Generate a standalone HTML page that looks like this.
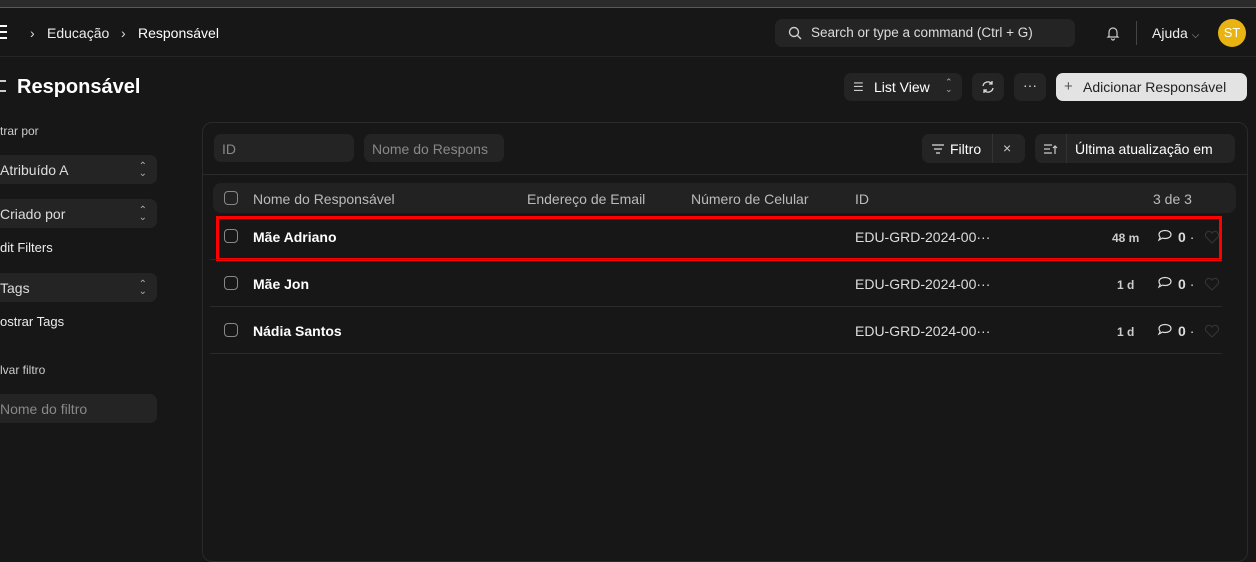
<!DOCTYPE html>
<html><head><meta charset="utf-8"><style>
*{box-sizing:border-box;margin:0;padding:0}
body{width:1256px;height:534px;overflow:hidden;background:#171717;font-family:"Liberation Sans",sans-serif;color:#e6e6e6;position:relative;font-size:14px}
.a{position:absolute}
.top{left:0;top:0;width:1256px;height:8px;background:#2b2b2b;border-bottom:1px solid #5a5a5a}
.nav{left:0;top:9px;width:1256px;height:48px;border-bottom:1px solid #262626}
.inp{background:#242424;border-radius:7px}
.btn{background:#242424;border-radius:7px}
.sel{background:#242424;border-radius:7px;color:#ddd;font-size:14px;padding:7px 0 0 0}
.arr{position:absolute;right:10px;top:8px;font-size:10px;color:#aaa;line-height:7px}
.lbl{font-size:12px;color:#ccc}
.hdr{font-size:14px;color:#bbb}
.name{font-weight:bold;font-size:14px;color:#fff}
.cb{width:14px;height:14px;border:1.5px solid #888;border-radius:4px}
.line{height:1px;background:#2a2a2a}
.id{font-size:14px;color:#ddd}
.tm{font-size:12px;color:#ccc;font-weight:bold}
</style></head><body>
<div class="a top"></div>
<div class="a nav"></div>
<div class="a" style="left:0;top:25px;width:7px;height:14px;border-top:2px solid #fff;border-bottom:2px solid #fff"><div style="margin-top:4px;height:2px;background:#fff;width:7px"></div></div>
<div class="a" style="left:30px;top:25px;font-size:14px;color:#ddd">›</div>
<div class="a" style="left:47px;top:25px;font-size:14px;color:#eee">Educação</div>
<div class="a" style="left:121px;top:25px;font-size:14px;color:#ddd">›</div>
<div class="a" style="left:138px;top:25px;font-size:14px;color:#fff">Responsável</div>
<div class="a inp" style="left:775px;top:19px;width:300px;height:28px"></div>
<svg class="a" style="left:788px;top:26px" width="14" height="14" viewBox="0 0 14 14"><circle cx="6" cy="6" r="4.5" fill="none" stroke="#ccc" stroke-width="1.4"/><path d="M9.5 9.5L13 13" stroke="#ccc" stroke-width="1.4"/></svg>
<div class="a" style="left:811px;top:25px;font-size:13.5px;color:#ddd">Search or type a command (Ctrl + G)</div>
<svg class="a" style="left:1105px;top:25px" width="16" height="16" viewBox="0 0 16 16"><path d="M4 11V7a4 4 0 018 0v4l1 1H3z M6.5 13.5a1.5 1.5 0 003 0" fill="none" stroke="#ccc" stroke-width="1.2"/></svg>
<div class="a" style="left:1136px;top:21px;width:1px;height:24px;background:#444"></div>
<div class="a" style="left:1152px;top:25px;font-size:14px;color:#eee">Ajuda <span style="font-size:10px;color:#aaa">⌵</span></div>
<div class="a" style="left:1218px;top:19px;width:28px;height:28px;border-radius:50%;background:#e9b311;color:#fff;font-size:13px;text-align:center;line-height:28px">ST</div>

<div class="a" style="left:0;top:80px;width:6px;height:12px;border-top:2px solid #ccc;border-bottom:2px solid #ccc"></div>
<div class="a" style="left:17px;top:76px;font-size:20px;font-weight:bold;color:#fff">Responsável</div>
<div class="a btn" style="left:844px;top:73px;width:118px;height:28px"></div>
<div class="a" style="left:853px;top:80px;font-size:12px;color:#ccc">☰</div>
<div class="a" style="left:874px;top:79px;font-size:14px;color:#fff">List View</div>
<div class="a" style="left:945px;top:79px;font-size:9px;color:#aaa;line-height:7px">⌃<br>⌄</div>
<div class="a btn" style="left:972px;top:73px;width:32px;height:28px"></div>
<svg class="a" style="left:980px;top:79px" width="16" height="16" viewBox="0 0 16 16"><path d="M3 7a5 5 0 019-2M13 9a5 5 0 01-9 2M12 2v3h-3M4 14v-3h3" fill="none" stroke="#ddd" stroke-width="1.3"/></svg>
<div class="a btn" style="left:1014px;top:73px;width:32px;height:28px;text-align:center;color:#ddd;line-height:24px">···</div>
<div class="a" style="left:1056px;top:73px;width:191px;height:28px;background:#e3e3e3;border-radius:7px"></div>
<div class="a" style="left:1064px;top:78px;font-size:15px;color:#555">+</div>
<div class="a" style="left:1083px;top:79px;font-size:14px;color:#222">Adicionar Responsável</div>

<div class="a lbl" style="left:0;top:124px">trar por</div>
<div class="a sel" style="left:-10px;top:155px;width:167px;height:29px;padding-left:10px">Atribuído A<span class="arr">⌃<br>⌄</span></div>
<div class="a sel" style="left:-10px;top:199px;width:167px;height:29px;padding-left:10px">Criado por<span class="arr">⌃<br>⌄</span></div>
<div class="a" style="left:0;top:240px;font-size:13px;color:#eee">dit Filters</div>
<div class="a sel" style="left:-10px;top:273px;width:167px;height:29px;padding-left:10px">Tags<span class="arr">⌃<br>⌄</span></div>
<div class="a" style="left:0;top:314px;font-size:13px;color:#eee">ostrar Tags</div>
<div class="a lbl" style="left:0;top:363px">lvar filtro</div>
<div class="a sel" style="left:-10px;top:394px;width:167px;height:29px;padding-left:10px;color:#888">Nome do filtro</div>

<div class="a" style="left:202px;top:122px;width:1046px;height:440px;border:1px solid #2a2a2a;border-radius:10px"></div>
<div class="a inp" style="left:214px;top:134px;width:140px;height:28px;color:#888;padding:7px 8px">ID</div>
<div class="a inp" style="left:364px;top:134px;width:140px;height:28px;color:#888;padding:7px 8px;overflow:hidden;white-space:nowrap">Nome do Respons</div>
<div class="a btn" style="left:922px;top:134px;width:103px;height:29px"></div>
<div class="a" style="left:992px;top:134px;width:1px;height:29px;background:#333"></div>
<svg class="a" style="left:931px;top:143px" width="14" height="12" viewBox="0 0 14 12"><path d="M1 2h12M3 6h8M5 10h4" stroke="#ddd" stroke-width="1.3"/></svg>
<div class="a" style="left:950px;top:141px;font-size:14px;color:#fff">Filtro</div>
<div class="a" style="left:1003px;top:140px;font-size:14px;color:#ccc">×</div>
<div class="a btn" style="left:1035px;top:134px;width:200px;height:29px"></div>
<div class="a" style="left:1066px;top:134px;width:1px;height:29px;background:#333"></div>
<svg class="a" style="left:1043px;top:142px" width="16" height="14" viewBox="0 0 16 14"><path d="M1 3h8M1 7h6M1 11h8M12 12V4M10 6l2-2 2 2" fill="none" stroke="#ccc" stroke-width="1.2"/></svg>
<div class="a" style="left:1075px;top:141px;font-size:14px;color:#fff">Última atualização em</div>
<div class="a" style="left:203px;top:174px;width:1044px;height:1px;background:#2a2a2a"></div>

<div class="a" style="left:213px;top:183px;width:1023px;height:30px;background:#222;border-radius:8px"></div>
<div class="a cb" style="left:224px;top:191px"></div>
<div class="a hdr" style="left:253px;top:191px">Nome do Responsável</div>
<div class="a hdr" style="left:527px;top:191px">Endereço de Email</div>
<div class="a hdr" style="left:691px;top:191px">Número de Celular</div>
<div class="a hdr" style="left:855px;top:191px">ID</div>
<div class="a hdr" style="left:1153px;top:191px">3 de 3</div>

<div class="a cb" style="left:224px;top:229px"></div>
<div class="a name" style="left:253px;top:229px">Mãe Adriano</div>
<div class="a id" style="left:855px;top:229px">EDU-GRD-2024-00···</div>
<div class="a tm" style="left:1112px;top:231px">48 m</div>
<div class="a" style="left:216px;top:216px;width:1006px;height:45px;border:3px solid #f00"></div>
<div class="a line" style="left:210px;top:259px;width:1012px"></div>

<div class="a cb" style="left:224px;top:276px"></div>
<div class="a name" style="left:253px;top:276px">Mãe Jon</div>
<div class="a id" style="left:855px;top:276px">EDU-GRD-2024-00···</div>
<div class="a tm" style="left:1117px;top:278px">1 d</div>
<div class="a line" style="left:210px;top:306px;width:1012px"></div>

<div class="a cb" style="left:224px;top:323px"></div>
<div class="a name" style="left:253px;top:323px">Nádia Santos</div>
<div class="a id" style="left:855px;top:323px">EDU-GRD-2024-00···</div>
<div class="a tm" style="left:1117px;top:325px">1 d</div>
<div class="a line" style="left:210px;top:353px;width:1012px"></div>

<svg class="a" style="left:1157px;top:229px" width="16" height="14" viewBox="0 0 16 14"><path d="M8 1.5c3.6 0 6 1.8 6 4s-2.4 4-6 4c-1 0-1.8-.1-2.6-.4L2 11l1.2-2.6C2.4 7.6 2 6.6 2 5.5c0-2.2 2.4-4 6-4z" fill="#171717" stroke="#ddd" stroke-width="1.2"/></svg>
<svg class="a" style="left:1157px;top:276px" width="16" height="14" viewBox="0 0 16 14"><path d="M8 1.5c3.6 0 6 1.8 6 4s-2.4 4-6 4c-1 0-1.8-.1-2.6-.4L2 11l1.2-2.6C2.4 7.6 2 6.6 2 5.5c0-2.2 2.4-4 6-4z" fill="#171717" stroke="#ddd" stroke-width="1.2"/></svg>
<svg class="a" style="left:1157px;top:323px" width="16" height="14" viewBox="0 0 16 14"><path d="M8 1.5c3.6 0 6 1.8 6 4s-2.4 4-6 4c-1 0-1.8-.1-2.6-.4L2 11l1.2-2.6C2.4 7.6 2 6.6 2 5.5c0-2.2 2.4-4 6-4z" fill="#171717" stroke="#ddd" stroke-width="1.2"/></svg>
<div class="a" style="left:1178px;top:229px;font-size:14px;font-weight:bold;color:#ddd">0 <span style="font-weight:normal">·</span></div>
<div class="a" style="left:1178px;top:276px;font-size:14px;font-weight:bold;color:#ddd">0 <span style="font-weight:normal">·</span></div>
<div class="a" style="left:1178px;top:323px;font-size:14px;font-weight:bold;color:#ddd">0 <span style="font-weight:normal">·</span></div>
<svg class="a" style="left:1204px;top:230px" width="16" height="14" viewBox="0 0 16 14"><path d="M8 13L2 7a3.3 3.3 0 016-4 3.3 3.3 0 016 4z" fill="none" stroke="#333" stroke-width="1.2"/></svg>
<svg class="a" style="left:1204px;top:277px" width="16" height="14" viewBox="0 0 16 14"><path d="M8 13L2 7a3.3 3.3 0 016-4 3.3 3.3 0 016 4z" fill="none" stroke="#333" stroke-width="1.2"/></svg>
<svg class="a" style="left:1204px;top:324px" width="16" height="14" viewBox="0 0 16 14"><path d="M8 13L2 7a3.3 3.3 0 016-4 3.3 3.3 0 016 4z" fill="none" stroke="#333" stroke-width="1.2"/></svg>
</body></html>
